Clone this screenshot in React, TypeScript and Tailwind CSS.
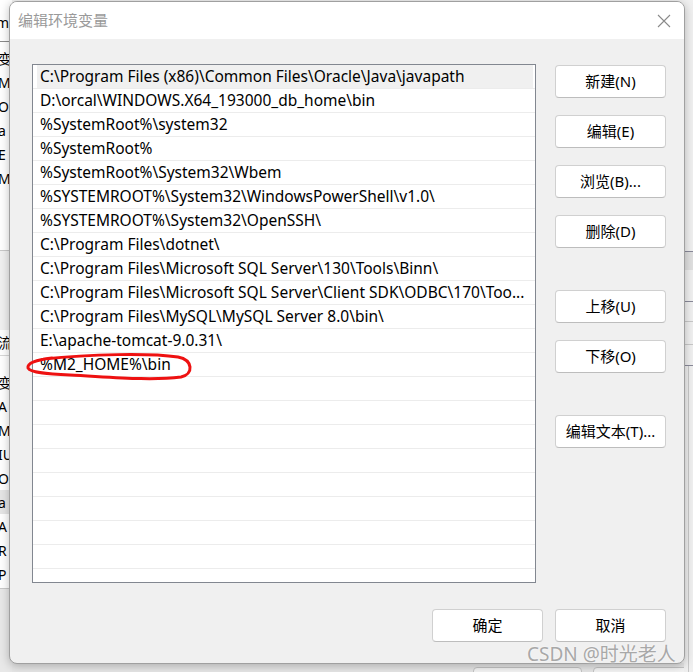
import React from 'react';

const paths = [
  'C:\\Program Files (x86)\\Common Files\\Oracle\\Java\\javapath',
  'D:\\orcal\\WINDOWS.X64_193000_db_home\\bin',
  '%SystemRoot%\\system32',
  '%SystemRoot%',
  '%SystemRoot%\\System32\\Wbem',
  '%SYSTEMROOT%\\System32\\WindowsPowerShell\\v1.0\\',
  '%SYSTEMROOT%\\System32\\OpenSSH\\',
  'C:\\Program Files\\dotnet\\',
  'C:\\Program Files\\Microsoft SQL Server\\130\\Tools\\Binn\\',
  'C:\\Program Files\\Microsoft SQL Server\\Client SDK\\ODBC\\170\\Too...',
  'C:\\Program Files\\MySQL\\MySQL Server 8.0\\bin\\',
  'E:\\apache-tomcat-9.0.31\\',
  '%M2_HOME%\\bin',
];

const rows = [...paths, ...Array(10).fill('')];

const font = "font-['Noto_Sans','Noto_Sans_CJK_SC',sans-serif]";

const Btn = ({ label, className = '' }: { label: string; className?: string }) => (
  <button
    className={`w-[111px] h-[33px] bg-white border border-[#d0d0d0] border-b-[#bdbdbd] rounded-[4px] text-[15px] text-black flex items-center justify-center ${className}`}
  >
    {label}
  </button>
);

// the other window behind the dialog; only its edge shows
const upperLeft = ['变量', 'MY', 'Or', 'a', 'E', 'M'];
const lowerLeft = ['变量', 'A', 'M2', 'IU', 'OS', 'a', 'A', 'R', 'P'];

const Sliver = ({ t, grey = false }: { t: string; grey?: boolean }) => (
  <div className={`h-[24px] shrink-0 flex items-center text-[14px] text-black whitespace-nowrap -ml-[2px] ${grey ? 'bg-[#e5e5e5]' : ''}`}>
    {t}
  </div>
);

export default function App() {
  return (
    <div className={`relative w-[693px] h-[672px] overflow-hidden bg-[#f0f0f0] ${font}`}>
      {/* desktop behind: window edges left, right and below */}
      <div className="absolute inset-0 flex">
        <div className="w-[12px] shrink-0 h-full bg-white flex flex-col overflow-hidden">
          <div className="h-[42px] shrink-0 flex items-center text-[14px] -ml-[4px] pt-[4px] border-b border-[#8a8a8a]">m</div>
          <div className="h-[208px] shrink-0 flex flex-col pt-[4px]">
            {upperLeft.map((t, i) => (
              <Sliver key={i} t={t} />
            ))}
          </div>
          <div className="h-[80px] shrink-0 bg-[#f0f0f0] border-t border-[#c8c8c8]" />
          <div className="h-[26px] shrink-0 flex items-center text-[14px] -ml-[2px] border-b border-[#d8d8d8]">流</div>
          <div className="flex flex-col pt-[14px] h-[232px] shrink-0">
            {lowerLeft.map((t, i) => (
              <Sliver key={i} t={t} grey={i === 5} />
            ))}
          </div>
          <div className="flex-1 bg-[#e8e8e8] border-t border-[#c8c8c8]" />
        </div>

        <div className="flex-1 min-w-0 overflow-hidden flex flex-col justify-end">
          <div className="h-[9px] bg-[#e6e6e6] flex gap-[11px] pl-[461px] pt-[4px]">
            <div className="w-[109px] h-[10px] shrink-0 bg-[#f4f4f4] border border-[#c4c4c4] rounded-[4px]" />
            <div className="w-[109px] h-[10px] shrink-0 bg-[#f4f4f4] border border-[#c4c4c4] rounded-[4px]" />
          </div>
        </div>

        <div className="w-[9px] shrink-0 h-full bg-[#f0f0f0] flex flex-col">
          <div className="h-[251px] shrink-0" />
          <div className="h-[19px] shrink-0 bg-[#e0e0e0] border-t border-[#8a8a9a]" />
          <div className="h-[32px] shrink-0 border-b border-[#8a8a9a]" />
          <div className="h-[20px] shrink-0 border-b border-[#c8c8c8]" />
          <div className="h-[23px] shrink-0 border-b border-[#c8c8c8]" />
          <div className="h-[21px] shrink-0 border-b border-[#8a8a9a]" />
          <div className="flex-1 ml-[4px] border-l border-[#c8c8c8]" />
        </div>
      </div>

      {/* dialog window */}
      <div className="absolute left-[9px] top-[1px] w-[676px] h-[663px] rounded-[8px] border border-[#a0a0a0] bg-[#f0f0f0] shadow-[0_2px_10px_rgba(0,0,0,0.25)] overflow-hidden flex flex-col">
        <div className="h-[37px] bg-white flex items-center justify-between pl-[8px] pr-[13px] shrink-0">
          <span className="text-[15px] text-[#9a9a9a]">编辑环境变量</span>
          <svg width="14" height="14" viewBox="0 0 14 14">
            <path d="M1 1 L13 13 M13 1 L1 13" stroke="#8a8a8a" strokeWidth="1.1" />
          </svg>
        </div>

        <div className="flex-1 flex flex-col pl-[22px] pr-[18px] pt-[25px] pb-[21px]">
          <div className="flex gap-[19px]">
            <div className="w-[504px] h-[519px] bg-white border border-[#828790] overflow-hidden">
              {rows.map((p, i) => (
                <div key={i} className="h-[24px] border-b border-[#ececec] flex items-center">
                  <div
                    className={`h-full w-full ml-[4px] mr-[2px] pl-[3px] pt-px flex items-center text-[15.5px] text-black whitespace-nowrap overflow-hidden ${
                      i === 0 ? 'bg-[#f0f0f0]' : ''
                    }`}
                  >
                    {p}
                  </div>
                </div>
              ))}
            </div>

            <div className="flex flex-col pt-px">
              <Btn label="新建(N)" />
              <Btn label="编辑(E)" className="mt-[17px]" />
              <Btn label="浏览(B)..." className="mt-[17px]" />
              <Btn label="删除(D)" className="mt-[17px]" />
              <Btn label="上移(U)" className="mt-[42px]" />
              <Btn label="下移(O)" className="mt-[17px]" />
              <Btn label="编辑文本(T)..." className="mt-[42px]" />
            </div>
          </div>

          <div className="flex justify-end gap-[12px] mt-auto">
            <Btn label="确定" className="w-[110px] h-[32px]" />
            <Btn label="取消" className="w-[110px] h-[32px]" />
          </div>
        </div>
      </div>

      {/* red marker round the new entry */}
      <svg className="absolute left-0 top-0 pointer-events-none" width="693" height="672">
        <path
          d="M44 359 C90 354 150 353 178 357 C193 360 194 374 181 377 C150 381 110 377 70 375 C50 374 30 373 28 368 C27 363 36 360 52 358"
          fill="none"
          stroke="#ee1111"
          strokeWidth="3"
          strokeLinecap="round"
        />
      </svg>

      {/* watermark */}
      <div className="absolute left-[527px] top-[642px] text-[19px] leading-[24px] text-[#a8a8a8] whitespace-nowrap [text-shadow:0_0_2px_#fff]">
        CSDN @时光老人
      </div>
    </div>
  );
}
